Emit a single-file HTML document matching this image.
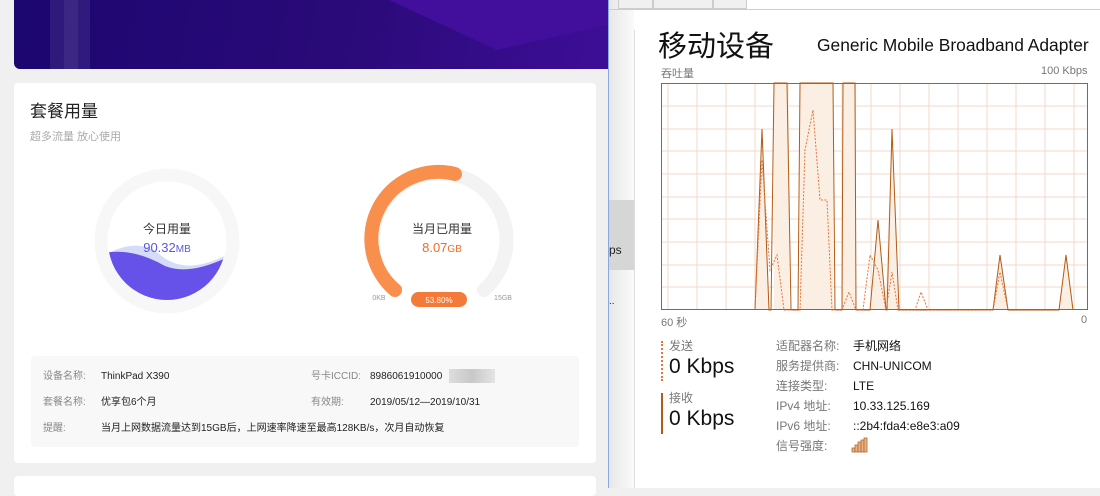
<!DOCTYPE html>
<html><head><meta charset="utf-8"><style>
*{margin:0;padding:0;box-sizing:border-box}
body{width:1100px;height:488px;overflow:hidden;background:#f0f0f0;position:relative;font-family:"Liberation Sans","Noto Sans CJK SC",sans-serif;}
.abs{position:absolute;white-space:nowrap}
.l{line-height:12px}
</style></head><body>
<div class="abs" style="left:14px;top:0;width:600px;height:69px;border-radius:0 0 6px 6px;overflow:hidden;background:linear-gradient(100deg,#1c0670 0%,#2a0a78 55%,#3d0e98 100%)">
  <div class="abs" style="left:36px;top:0;width:40px;height:69px;background:rgba(255,255,255,0.08)"></div>
  <div class="abs" style="left:50px;top:0;width:14px;height:69px;background:rgba(255,255,255,0.06)"></div>
  <div class="abs" style="left:375px;top:0;width:240px;height:50px;background:#420e9c;clip-path:polygon(0 0,100% 0,100% 40%,45% 100%)"></div>
</div>
<div class="abs" style="left:14px;top:83px;width:582px;height:380px;background:#fff;border-radius:4px"></div>
<div class="abs" style="left:14px;top:476px;width:582px;height:20px;background:#fff;border-radius:4px"></div>
<div class="abs" style="left:30px;top:97px;font-size:17px;color:#222">套餐用量</div>
<div class="abs" style="left:30px;top:128px;font-size:11px;color:#aaa">超多流量 放心使用</div>
<svg class="abs" style="left:90px;top:158px" width="160" height="160" viewBox="0 0 160 160">
  <circle cx="77" cy="83" r="66" fill="none" stroke="#f7f7f7" stroke-width="13"/>
  <defs><clipPath id="c"><circle cx="77" cy="83" r="59"/></clipPath></defs>
  <g clip-path="url(#c)">
   <path d="M10 100 Q45 78 68 95 Q95 120 140 95 L150 170 L0 170Z" fill="#d6dcf8"/>
   <path d="M10 96 Q40 88 75 108 Q100 118 140 98 L150 170 L0 170Z" fill="#6652e8"/>
  </g>
  <text x="77" y="75" font-size="12" text-anchor="middle" fill="#333" font-family="Liberation Sans,Noto Sans CJK SC">今日用量</text>
  <text x="77" y="94" font-size="13" text-anchor="middle" fill="#5a55e8" font-family="Liberation Sans">90.32<tspan font-size="10">MB</tspan></text>
</svg>
<svg class="abs" style="left:360px;top:158px" width="170" height="150" viewBox="0 0 170 150">
  <path d="M35 132 A67 67 0 1 1 124 132" fill="none" stroke="#f3f3f3" stroke-width="14" stroke-linecap="round"/>
  <path d="M35 132 A67 67 0 0 1 95 16" fill="none" stroke="#f98f4c" stroke-width="14" stroke-linecap="round"/>
  <text x="82" y="75" font-size="12" text-anchor="middle" fill="#333" font-family="Liberation Sans,Noto Sans CJK SC">当月已用量</text>
  <text x="82" y="94" font-size="13" text-anchor="middle" fill="#f26b2a" font-family="Liberation Sans">8.07<tspan font-size="10">GB</tspan></text>
  <text x="19" y="142" font-size="7" fill="#999" text-anchor="middle">0KB</text>
  <text x="143" y="142" font-size="7" fill="#999" text-anchor="middle">15GB</text>
  <rect x="51" y="134" width="56" height="15" rx="7.5" fill="#f37a38"/>
  <text x="79" y="145" font-size="8" fill="#fff" text-anchor="middle">53.80%</text>
</svg>
<div class="abs" style="left:31px;top:356px;width:548px;height:91px;background:#f8f8f8;border-radius:4px"></div>
<div class="abs l" style="left:43px;top:371px;font-size:10px;color:#888">设备名称:</div>
<div class="abs l" style="left:101px;top:371px;font-size:10px;color:#222">ThinkPad X390</div>
<div class="abs l" style="left:311px;top:371px;font-size:10px;color:#888">号卡ICCID:</div>
<div class="abs l" style="left:370px;top:371px;font-size:10px;color:#222">8986061910000</div>
<div class="abs" style="left:449px;top:369px;width:46px;height:14px;background:linear-gradient(90deg,#ddd,#c8c8c8,#e4e4e4)"></div>
<div class="abs l" style="left:43px;top:397px;font-size:10px;color:#888">套餐名称:</div>
<div class="abs l" style="left:101px;top:397px;font-size:10px;color:#222">优享包6个月</div>
<div class="abs l" style="left:311px;top:397px;font-size:10px;color:#888">有效期:</div>
<div class="abs l" style="left:370px;top:397px;font-size:10px;color:#222">2019/05/12—2019/10/31</div>
<div class="abs l" style="left:43px;top:423px;font-size:10px;color:#888">提醒:</div>
<div class="abs l" style="left:101px;top:423px;font-size:10px;color:#222">当月上网数据流量达到15GB后，上网速率降速至最高128KB/s，次月自动恢复</div>
<div class="abs" style="left:608px;top:0;width:492px;height:488px;background:#fff"></div>
<div class="abs" style="left:608px;top:0;width:1px;height:488px;background:#8aa8e0"></div>
<div class="abs" style="left:609px;top:0;width:25px;height:488px;background:linear-gradient(90deg,#e8e8e8,#fafafa)"></div>
<div class="abs" style="left:634px;top:30px;width:1px;height:458px;background:#ddd"></div>
<div class="abs" style="left:609px;top:200px;width:25px;height:70px;background:#d6d6d6"></div>
<div class="abs" style="left:609px;top:243px;font-size:12px;color:#222">ps</div>
<div class="abs" style="left:609px;top:296px;font-size:10px;color:#222">..</div>
<div class="abs" style="left:609px;top:9px;width:491px;height:1px;background:#ccc"></div>
<div class="abs" style="left:618px;top:0;width:35px;height:9px;border:1px solid #ccc;border-top:0;background:#f0f0f0"></div>
<div class="abs" style="left:653px;top:0;width:60px;height:9px;border:1px solid #ccc;border-top:0;background:#f0f0f0"></div>
<div class="abs" style="left:713px;top:0;width:34px;height:9px;border:1px solid #ccc;border-top:0;background:#f0f0f0"></div>
<div class="abs" style="left:658px;top:23px;font-size:29px;color:#111">移动设备</div>
<div class="abs" style="left:817px;top:35px;font-size:17.4px;color:#111">Generic Mobile Broadband Adapter</div>
<div class="abs" style="left:661px;top:65px;font-size:11px;color:#777">吞吐量</div>
<div class="abs" style="left:1041px;top:65px;font-size:11px;color:#777">100 Kbps</div>
<svg class="abs" style="left:660px;top:82px" width="430" height="230" viewBox="660 82 430 230">
  <g stroke="#f0d8c8" stroke-width="1">
   <path d="M668 83V310M697 83V310M726 83V310M755 83V310M784 83V310M813 83V310M842 83V310M871 83V310M900 83V310M929 83V310M958 83V310M987 83V310M1016 83V310M1045 83V310M1074 83V310"/>
   <path d="M661 106H1088M661 129H1088M661 151H1088M661 174H1088M661 197H1088M661 219H1088M661 242H1088M661 265H1088M661 287H1088"/>
  </g>
  <path d="M755 310L762 129L769 310ZM774 83H789V310H774ZM800 83H833V310H800ZM842 83H856V310H842ZM870 310L878 220L886 310ZM885 310L892 129L899 310ZM993 310L1000 255L1008 310ZM1059 310L1066 255L1073 310Z" fill="#fbeee3"/>
  <polyline fill="none" stroke="#b45a14" stroke-width="1" points="755,310 762,129 769,310 771,310 774,83 787,83 791,310 798,310 800,83 833,83 835,310 842,310 843,83 855,83 856,310 870,310 878,220 886,310 887,310 892,129 899,310 993,310 1000,255 1008,310 1059,310 1066,255 1073,310"/>
  <polyline fill="none" stroke="#e8743a" stroke-width="1" stroke-dasharray="2,1.5" points="755,310 762,160 770,270 777,255 784,310 800,310 805,150 813,110 820,200 827,200 832,310 842,310 849,292 856,310 863,310 870,255 878,270 886,310 892,272 898,310 915,310 921,292 928,310 993,310 1000,272 1008,310"/>
  <rect x="661.5" y="83.5" width="426" height="226" fill="none" stroke="#b45a14"/>
</svg>
<div class="abs" style="left:661px;top:314px;font-size:11px;color:#777">60 秒</div>
<div class="abs" style="left:1081px;top:314px;font-size:11px;color:#777">0</div>
<div class="abs" style="left:661px;top:341px;height:40px;border-left:2px dotted #e8743a"></div>
<div class="abs" style="left:669px;top:337px;font-size:12px;color:#777">发送</div>
<div class="abs" style="left:669px;top:355px;font-size:21px;color:#111">0 Kbps</div>
<div class="abs" style="left:661px;top:393px;height:41px;border-left:2px solid #b45a14"></div>
<div class="abs" style="left:669px;top:389px;font-size:12px;color:#777">接收</div>
<div class="abs" style="left:669px;top:407px;font-size:21px;color:#111">0 Kbps</div>
<div class="abs" style="left:776px;top:336px;font-size:12px;line-height:20px;color:#777">适配器名称:<br>服务提供商:<br>连接类型:<br>IPv4 地址:<br>IPv6 地址:<br>信号强度:</div>
<div class="abs" style="left:853px;top:336px;font-size:12px;line-height:20px;color:#111">手机网络<br>CHN-UNICOM<br>LTE<br>10.33.125.169<br>::2b4:fda4:e8e3:a09</div>
<svg class="abs" style="left:851px;top:437px" width="18" height="16"><g fill="#e8b088" stroke="#b46a30" stroke-width="0.8"><rect x="1" y="11" width="3" height="4"/><rect x="4" y="8" width="3" height="7"/><rect x="7" y="5" width="3" height="10"/><rect x="10" y="3" width="3" height="12"/><rect x="13" y="1" width="3" height="14"/></g></svg>
</body></html>
